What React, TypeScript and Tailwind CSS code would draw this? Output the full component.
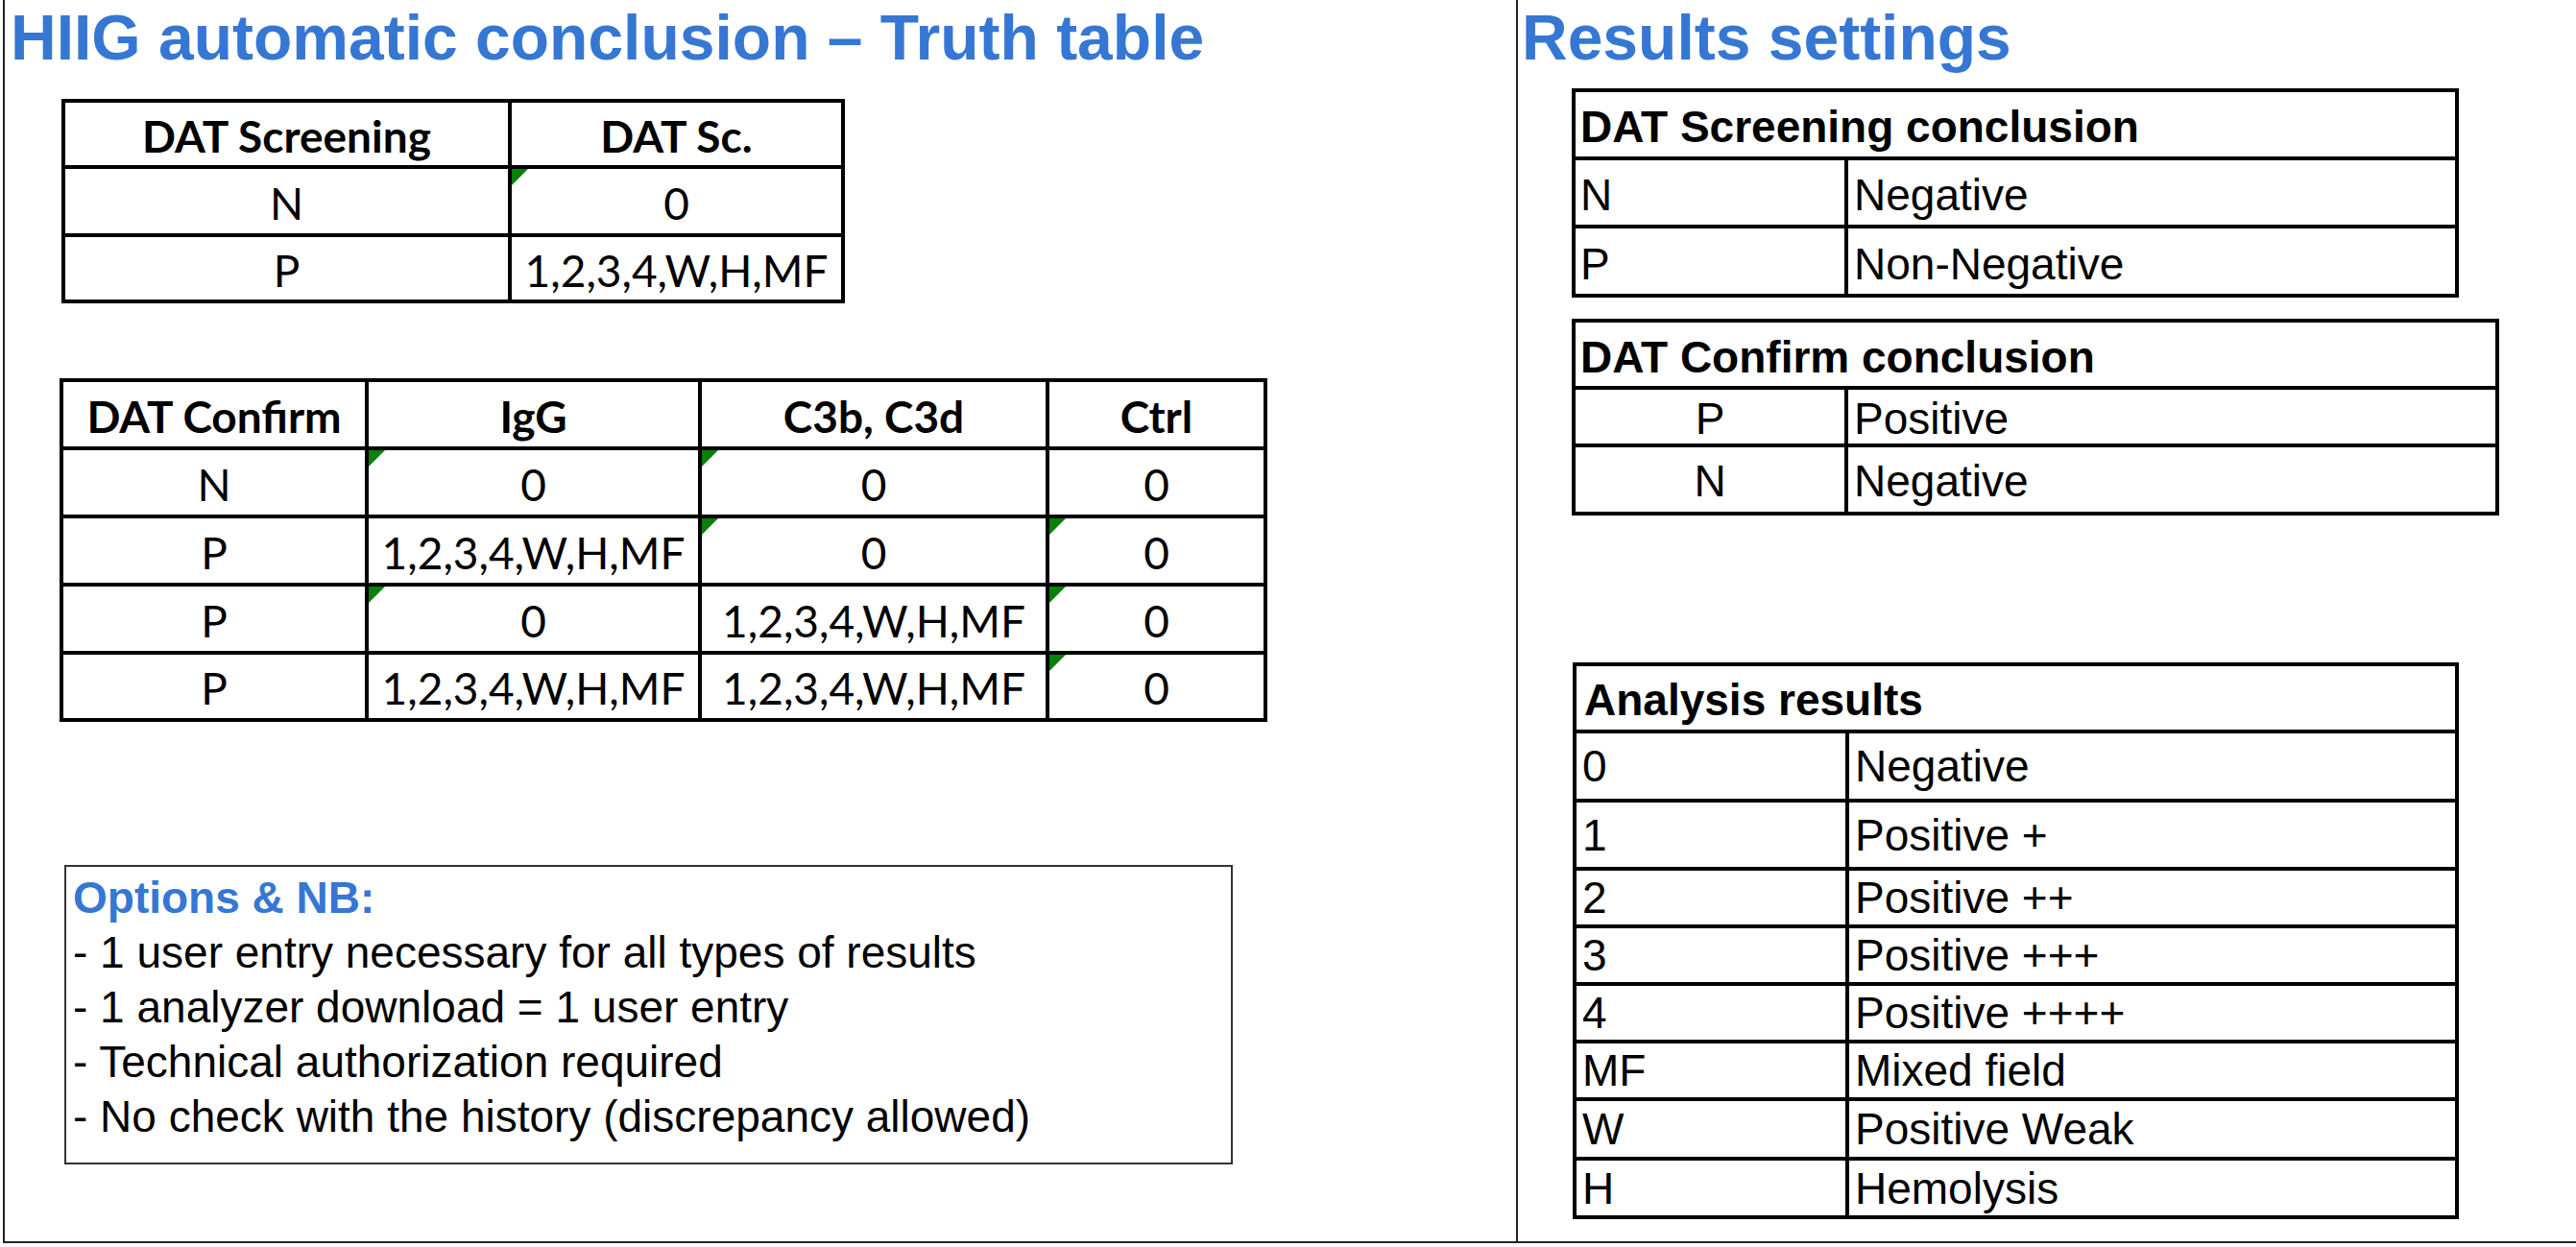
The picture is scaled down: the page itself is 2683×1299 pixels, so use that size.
const MULTI = '1,2,3,4,W,H,MF';

const CONFIRM_ROWS = [
  { c: ['N', '0', '0', '0'], tri: [false, true, true, false] },
  { c: ['P', MULTI, '0', '0'], tri: [false, false, true, true] },
  { c: ['P', '0', MULTI, '0'], tri: [false, true, false, true] },
  { c: ['P', MULTI, MULTI, '0'], tri: [false, false, false, true] },
];

const ANALYSIS = [
  ['0', 'Negative'],
  ['1', 'Positive +'],
  ['2', 'Positive ++'],
  ['3', 'Positive +++'],
  ['4', 'Positive ++++'],
  ['MF', 'Mixed field'],
  ['W', 'Positive Weak'],
  ['H', 'Hemolysis'],
];

const NOTES = [
  '- 1 user entry necessary for all types of results',
  '- 1 analyzer download = 1 user entry',
  '- Technical authorization required',
  '- No check with the history (discrepancy allowed)',
];

// excel "number stored as text" marker
function Flag() {
  return (
    <svg className="absolute left-0 top-0" width="17" height="17" viewBox="0 0 17 17">
      <polygon points="0,0 17,0 0,17" fill="#0a7f0a" />
    </svg>
  );
}

function XCell({ children, bold, flag }: { children: React.ReactNode; bold?: boolean; flag?: boolean }) {
  return (
    <div className={`relative flex items-center justify-center bg-white pt-[4px] whitespace-nowrap ${bold ? 'font-bold' : ''}`}>
      {flag && <Flag />}
      {children}
    </div>
  );
}

export default function App() {
  return (
    <div className="w-[2683px] h-[1299px] bg-white pl-[3px] text-black">
      <div className="flex h-[1295px] border-l-2 border-b-2 border-[#222]">
        {/* left: truth table */}
        <div className="w-[1574px] shrink-0 pt-[6px] pl-[6px]">
          <h1 className="font-['Liberation_Sans',Arial,sans-serif] text-[66px] leading-none font-bold text-[#3577d3] whitespace-nowrap">
            HIIG automatic conclusion – Truth table
          </h1>

          <div className="font-['Lato',sans-serif] text-[46px] leading-none">
            <div className="ml-[53px] mt-[31px] grid w-fit grid-cols-[461px_343px] grid-rows-[65px_67px_65px] gap-[4px] bg-black p-[4px]">
              <XCell bold>DAT Screening</XCell>
              <XCell bold>DAT Sc.</XCell>
              <XCell>N</XCell>
              <XCell flag>0</XCell>
              <XCell>P</XCell>
              <XCell>{MULTI}</XCell>
            </div>

            <div className="ml-[51px] mt-[78px] grid w-fit grid-cols-[314px_343px_358px_223px] grid-rows-[67px_67px_67px_67px_66px] gap-[4px] bg-black p-[4px]">
              <XCell bold>DAT Confirm</XCell>
              <XCell bold>IgG</XCell>
              <XCell bold>C3b, C3d</XCell>
              <XCell bold>Ctrl</XCell>
              {CONFIRM_ROWS.map((r, i) =>
                r.c.map((v, j) => (
                  <XCell key={`${i}-${j}`} flag={r.tri[j]}>
                    {v}
                  </XCell>
                ))
              )}
            </div>
          </div>

          <div className="ml-[56px] mt-[149px] h-[312px] w-[1217px] border-2 border-[#333] pl-[7px] pt-[4px] font-['Liberation_Sans',Arial,sans-serif] text-[46px] leading-[57px] whitespace-nowrap">
            <div className="font-bold text-[#3577d3]">Options &amp; NB:</div>
            {NOTES.map((n) => (
              <div key={n}>{n}</div>
            ))}
          </div>
        </div>

        <div className="w-[2px] shrink-0 bg-[#222]" />

        {/* right: results settings */}
        <div className="flex-1 pt-[6px] pl-[4px] font-['Liberation_Sans',Arial,sans-serif]">
          <h1 className="text-[66px] leading-none font-bold text-[#3577d3] whitespace-nowrap">Results settings</h1>

          <div className="text-[46px] leading-none whitespace-nowrap">
            <div className="ml-[52px] mt-[20px] grid w-fit grid-cols-[280px_632px] grid-rows-[67px_67px_68px] gap-[4px] bg-black p-[4px]">
              <div className="col-span-2 flex items-center bg-white pl-[5px] pt-[5px] font-bold">DAT Screening conclusion</div>
              <div className="flex items-center bg-white pl-[5px] pt-[5px]">N</div>
              <div className="flex items-center bg-white pl-[6px] pt-[5px]">Negative</div>
              <div className="flex items-center bg-white pl-[5px] pt-[5px]">P</div>
              <div className="flex items-center bg-white pl-[6px] pt-[5px]">Non-Negative</div>
            </div>

            <div className="ml-[52px] mt-[22px] grid w-fit grid-cols-[280px_674px] grid-rows-[66px_56px_67px] gap-[4px] bg-black p-[4px]">
              <div className="col-span-2 flex items-center bg-white pl-[5px] pt-[5px] font-bold">DAT Confirm conclusion</div>
              <div className="flex items-center justify-center bg-white pt-[3px]">P</div>
              <div className="flex items-center bg-white pl-[6px] pt-[3px]">Positive</div>
              <div className="flex items-center justify-center bg-white pt-[3px]">N</div>
              <div className="flex items-center bg-white pl-[6px] pt-[3px]">Negative</div>
            </div>

            <div className="ml-[53px] mt-[153px] grid w-fit grid-cols-[280px_631px] grid-rows-[66px_68px_67px_56px_56px_56px_56px_58px_57px] gap-[4px] bg-black p-[4px]">
              <div className="col-span-2 flex items-center bg-white pl-[8px] pt-[3px] font-bold">Analysis results</div>
              {ANALYSIS.map(([k, v]) => (
                <div key={k} className="contents">
                  <div className="flex items-center bg-white pl-[6px]">{k}</div>
                  <div className="flex items-center bg-white pl-[6px]">{v}</div>
                </div>
              ))}
            </div>
          </div>
        </div>
      </div>
    </div>
  );
}
